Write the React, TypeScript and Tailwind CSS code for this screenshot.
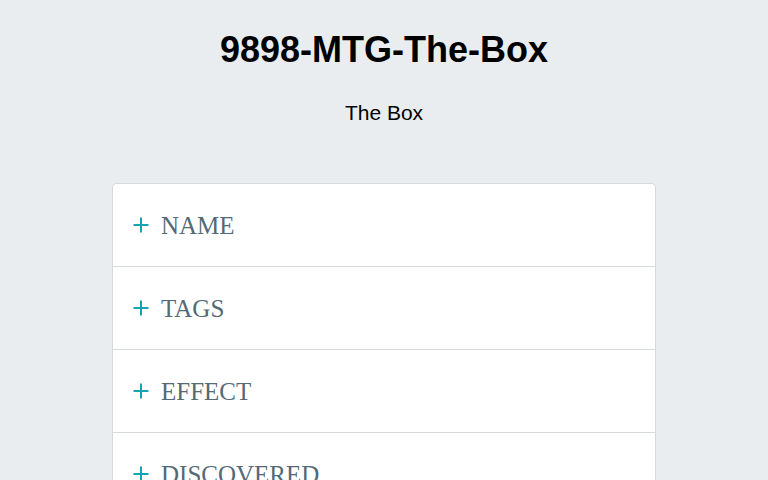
import React from 'react';

const sections = ['NAME', 'TAGS', 'EFFECT', 'DISCOVERED', 'NOTES'];

function PlusIcon() {
  return (
    <svg width="16" height="16" viewBox="0 0 16 16" className="shrink-0">
      <path d="M8 0.5V15.5M0.5 8H15.5" stroke="#17a3b2" strokeWidth="2" fill="none" />
    </svg>
  );
}

export default function App() {
  return (
    <div className="min-h-screen bg-[#e9edf0] pt-[28px] pb-10 font-['Liberation_Sans',Arial,sans-serif]">
      <h1 className="text-center text-[36px] leading-[44px] font-bold text-black">9898-MTG-The-Box</h1>
      <p className="mt-[27px] text-center text-[21px] leading-[28px] text-black">The Box</p>

      <div className="mx-auto mt-[56px] w-[544px] overflow-hidden rounded-[4px] border border-[#d6dadd] bg-white">
        {sections.map((label) => (
          <div
            key={label}
            className="flex h-[83px] items-center gap-3 border-b border-[#d6dadd] px-5 last:border-b-0"
          >
            <PlusIcon />
            <span className="font-['Liberation_Serif','Times_New_Roman',serif] text-[25px] leading-none text-[#546a75]">
              {label}
            </span>
          </div>
        ))}
      </div>
    </div>
  );
}
